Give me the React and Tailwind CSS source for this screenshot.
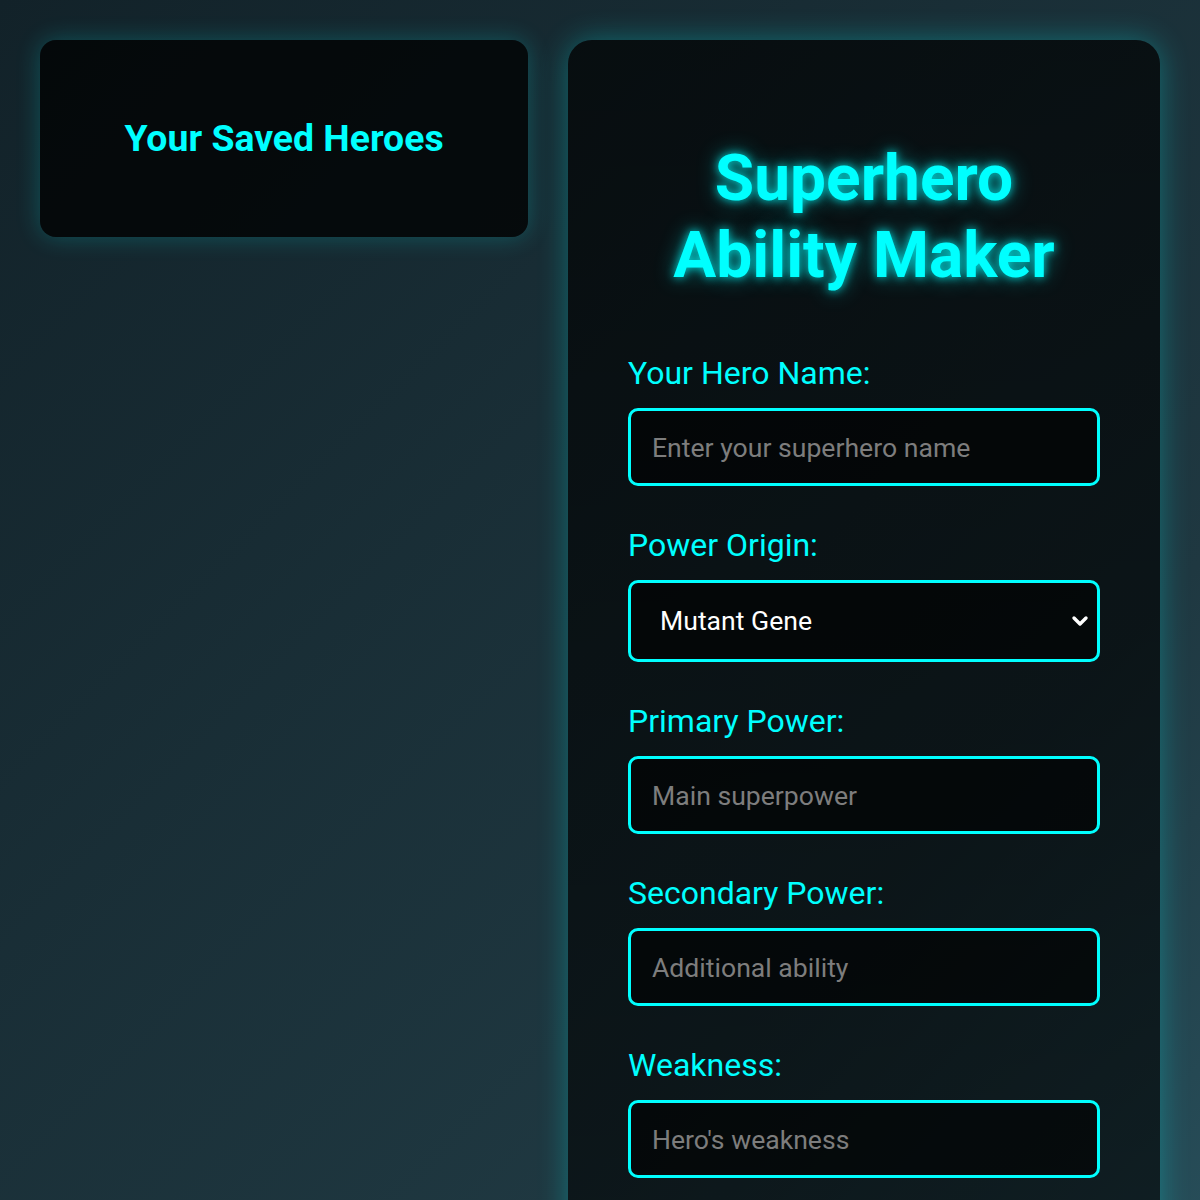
const fields = [
  { id: "name", label: "Your Hero Name:", placeholder: "Enter your superhero name" },
  { id: "origin", label: "Power Origin:", select: ["Mutant Gene", "Alien Tech", "Lab Accident", "Magic Artifact", "Cosmic Radiation"] },
  { id: "primary", label: "Primary Power:", placeholder: "Main superpower" },
  { id: "secondary", label: "Secondary Power:", placeholder: "Additional ability" },
  { id: "weakness", label: "Weakness:", placeholder: "Hero's weakness" },
];

function Field({ field }) {
  return (
    <div className="mb-[42px]">
      <label htmlFor={field.id} className="block text-[32px] leading-[35px] text-[#00ffff] mb-[17px]">
        {field.label}
      </label>
      {field.select ? (
        <div className="relative">
          <select
            id={field.id}
            defaultValue={field.select[0]}
            className="w-full h-[82px] appearance-none rounded-[10px] border-[3px] border-[#00ffff] bg-black/60 pl-[29px] pr-12 text-[26.6px] text-white outline-none"
          >
            {field.select.map((o) => (
              <option key={o} className="bg-black">{o}</option>
            ))}
          </select>
          {/* chevron for the custom select */}
          <svg className="pointer-events-none absolute right-[11px] top-1/2 -translate-y-1/2" width="18" height="18" viewBox="0 0 18 18">
            <path d="M3 6l6 6 6-6" fill="none" stroke="white" strokeWidth="3.4" strokeLinecap="round" strokeLinejoin="round" />
          </svg>
        </div>
      ) : (
        <input
          id={field.id}
          type="text"
          placeholder={field.placeholder}
          className="block w-full h-[78px] rounded-[10px] border-[3px] border-[#00ffff] bg-black/60 px-[21px] text-[26.6px] text-white placeholder:text-[#7d7d7d] outline-none"
        />
      )}
    </div>
  );
}

export default function App() {
  return (
    <div
      className="min-h-screen bg-[linear-gradient(135deg,#122229_0%,#1f3841_70%,#28505c_100%)] p-10"
      style={{ fontFamily: "Roboto, 'Noto Sans', sans-serif" }}
    >
      <div className="flex items-start gap-10">
        {/* Saved heroes list */}
        <div className="w-[488px] h-[197px] flex items-center justify-center rounded-2xl bg-black/75 shadow-[0_0_25px_rgba(0,255,255,0.22)]">
          <h2 className="text-[37.4px] font-bold text-[#00ffff]">Your Saved Heroes</h2>
        </div>

        {/* Maker form */}
        <div className="w-[592px] rounded-[24px] bg-[linear-gradient(180deg,rgba(0,0,0,0.68),rgba(0,0,0,0.6))] px-[60px] pt-[100px] pb-[60px] shadow-[0_0_30px_rgba(0,255,255,0.3)]">
          <h1 className="text-center text-[64px] leading-[77px] font-bold text-[#00ffff] [text-shadow:0_0_10px_rgba(0,255,255,0.8),0_0_22px_rgba(0,255,255,0.45)] mb-[62px]">
            Superhero
            <br />
            Ability Maker
          </h1>
          {fields.map((f) => (
            <Field key={f.id} field={f} />
          ))}
        </div>
      </div>
    </div>
  );
}
